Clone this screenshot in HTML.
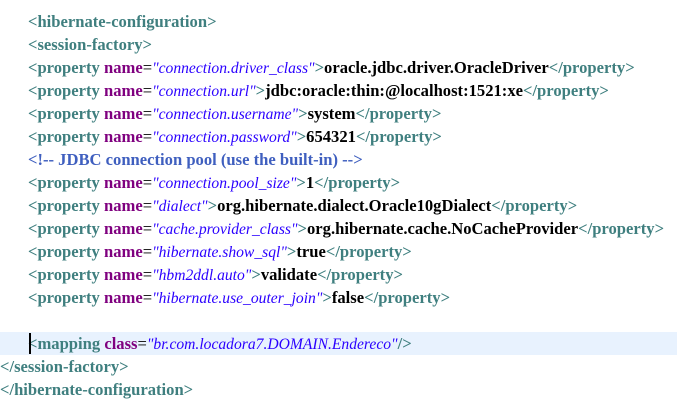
<!DOCTYPE html>
<html><head><meta charset="utf-8"><style>
body{margin:0;width:677px;height:404px;background:#fff;overflow:hidden;font-family:"Liberation Serif",serif;font-size:16.6px;}
.l{position:absolute;left:0;height:23px;line-height:23px;white-space:pre;width:677px}
.t{color:#3f7f7f;font-weight:bold}
.a{color:#7f007f;font-weight:bold}
.v{color:#2a00ff;font-style:italic;font-size:15.6px}
.x{color:#000;font-weight:bold}
.c{color:#3f5fbf;font-weight:bold}
.e{color:#000}
</style></head><body>
<div class="l" style="top:10px;padding-left:28px"><span class="t">&lt;hibernate-configuration&gt;</span></div>
<div class="l" style="top:33px;padding-left:28px"><span class="t">&lt;session-factory&gt;</span></div>
<div class="l" style="top:56px;padding-left:28px"><span class="t">&lt;property </span><span class="a">name</span><span class="e">=</span><span class="v">"connection.driver_class"</span><span class="t">&gt;</span><span class="x">oracle.jdbc.driver.OracleDriver</span><span class="t">&lt;/property&gt;</span></div>
<div class="l" style="top:79px;padding-left:28px"><span class="t">&lt;property </span><span class="a">name</span><span class="e">=</span><span class="v">"connection.url"</span><span class="t">&gt;</span><span class="x">jdbc:oracle:thin:@localhost:1521:xe</span><span class="t">&lt;/property&gt;</span></div>
<div class="l" style="top:102px;padding-left:28px"><span class="t">&lt;property </span><span class="a">name</span><span class="e">=</span><span class="v">"connection.username"</span><span class="t">&gt;</span><span class="x">system</span><span class="t">&lt;/property&gt;</span></div>
<div class="l" style="top:125px;padding-left:28px"><span class="t">&lt;property </span><span class="a">name</span><span class="e">=</span><span class="v">"connection.password"</span><span class="t">&gt;</span><span class="x">654321</span><span class="t">&lt;/property&gt;</span></div>
<div class="l" style="top:148px;padding-left:28px"><span class="c">&lt;!-- JDBC connection pool (use the built-in) --&gt;</span></div>
<div class="l" style="top:171px;padding-left:28px"><span class="t">&lt;property </span><span class="a">name</span><span class="e">=</span><span class="v">"connection.pool_size"</span><span class="t">&gt;</span><span class="x">1</span><span class="t">&lt;/property&gt;</span></div>
<div class="l" style="top:194px;padding-left:28px"><span class="t">&lt;property </span><span class="a">name</span><span class="e">=</span><span class="v">"dialect"</span><span class="t">&gt;</span><span class="x">org.hibernate.dialect.Oracle10gDialect</span><span class="t">&lt;/property&gt;</span></div>
<div class="l" style="top:217px;padding-left:28px"><span class="t">&lt;property </span><span class="a">name</span><span class="e">=</span><span class="v">"cache.provider_class"</span><span class="t">&gt;</span><span class="x">org.hibernate.cache.NoCacheProvider</span><span class="t">&lt;/property&gt;</span></div>
<div class="l" style="top:240px;padding-left:28px"><span class="t">&lt;property </span><span class="a">name</span><span class="e">=</span><span class="v">"hibernate.show_sql"</span><span class="t">&gt;</span><span class="x">true</span><span class="t">&lt;/property&gt;</span></div>
<div class="l" style="top:263px;padding-left:28px"><span class="t">&lt;property </span><span class="a">name</span><span class="e">=</span><span class="v">"hbm2ddl.auto"</span><span class="t">&gt;</span><span class="x">validate</span><span class="t">&lt;/property&gt;</span></div>
<div class="l" style="top:286px;padding-left:28px"><span class="t">&lt;property </span><span class="a">name</span><span class="e">=</span><span class="v">"hibernate.use_outer_join"</span><span class="t">&gt;</span><span class="x">false</span><span class="t">&lt;/property&gt;</span></div>
<div class="l" style="top:332px;padding-left:28px;background:#e8f2fe"><span style="position:absolute;left:29px;top:1px;width:2px;height:21px;background:#000"></span><span class="t">&lt;mapping </span><span class="a">class</span><span class="e">=</span><span class="v">"br.com.locadora7.DOMAIN.Endereco"</span><span class="t">/&gt;</span></div>
<div class="l" style="top:355px;padding-left:0"><span class="t">&lt;/session-factory&gt;</span></div>
<div class="l" style="top:378px;padding-left:0"><span class="t">&lt;/hibernate-configuration&gt;</span></div>
</body></html>
